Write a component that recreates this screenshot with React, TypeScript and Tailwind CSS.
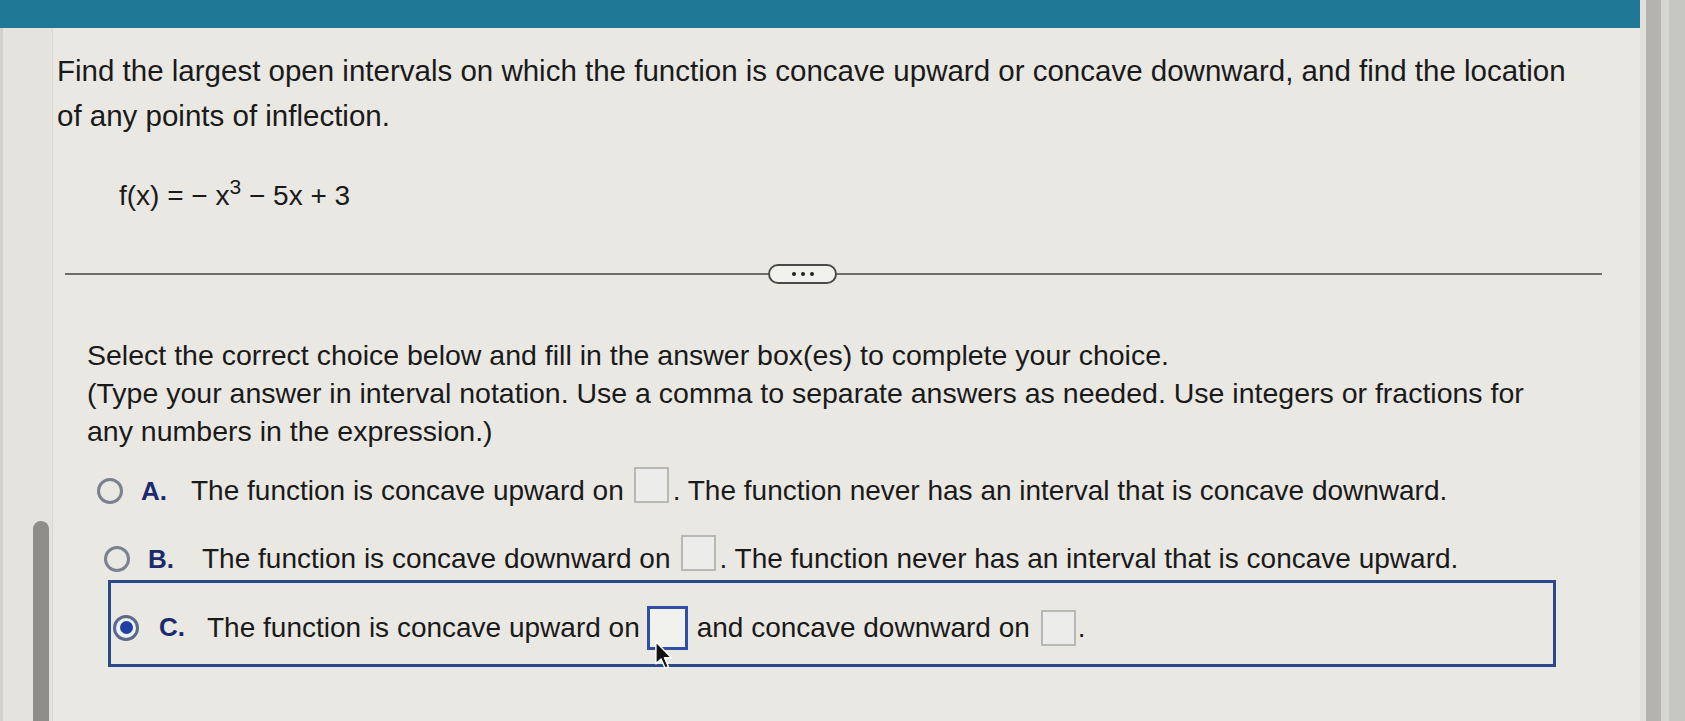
import React from "react";

const Radio = ({ checked = false }: { checked?: boolean }) => (
  <span
    className={
      checked
        ? "w-[26px] h-[26px] rounded-full border-[3px] border-[#5c6a8a] bg-[#eef0f4] flex items-center justify-center shrink-0"
        : "w-[26px] h-[26px] rounded-full border-[3px] border-[#7c8190] shrink-0"
    }
  >
    {checked && <span className="w-[13px] h-[13px] rounded-full bg-[#1f3fa3]" />}
  </span>
);

const AnswerBox = ({ active = false }: { active?: boolean }) => (
  <span
    className={
      active
        ? "inline-block w-[41px] h-[44px] border-[3px] border-[#2d4fa6] bg-[#f1f1ee] shrink-0"
        : "inline-block w-[35px] h-[36px] border-2 border-[#b8b8b5] bg-[#ececea] shrink-0"
    }
  />
);

const App = () => {
  return (
    <div className="relative w-[1685px] h-[721px] overflow-hidden flex bg-[#e9e8e3] text-[#1a1a1a] font-['Liberation_Sans',Arial,sans-serif]">
      <div className="w-[1640px] shrink-0 flex flex-col">
        <div className="h-[28px] shrink-0 bg-[#1e7896]" />
        <div className="flex flex-1 min-h-0">
          {/* left gutter with scroll thumb */}
          <div className="w-[52px] shrink-0 flex flex-col justify-end border-l-[3px] border-[#d3d1cb] bg-[#e5e3dd]">
            <div className="ml-[30px] w-[16px] h-[200px] rounded-t-full bg-[#8f8d89]" />
          </div>

          <div className="flex-1 min-w-0 pr-[38px] border-l border-[#dad8d2]">
            <p className="pt-[20px] pl-[4px] text-[29.5px] leading-[45px]">
              Find the largest open intervals on which the function is concave upward or concave downward, and find the location
              <br />
              of any points of inflection.
            </p>

            <p className="mt-[35px] pl-[66px] text-[28px] leading-[45px]">
              f(x) = − x<sup className="text-[21px] relative top-[-11px]">3</sup> − 5x + 3
            </p>

            <div className="mt-[46px] ml-[12px] h-[20px] flex items-center">
              <div className="w-[703px] h-[2px] bg-[#6e6e6c]" />
              <div className="w-[69px] h-[20px] rounded-full border-2 border-[#4a4a4a] bg-[#f1f1ee] flex items-center justify-center gap-[5px] shrink-0">
                <span className="w-[4px] h-[4px] rounded-full bg-[#222]" />
                <span className="w-[4px] h-[4px] rounded-full bg-[#222]" />
                <span className="w-[4px] h-[4px] rounded-full bg-[#222]" />
              </div>
              <div className="flex-1 h-[2px] bg-[#6e6e6c]" />
            </div>

            <p className="mt-[52px] pl-[34px] text-[28.5px] leading-[38px]">
              Select the correct choice below and fill in the answer box(es) to complete your choice.
              <br />
              (Type your answer in interval notation. Use a comma to separate answers as needed. Use integers or fractions for
              <br />
              any numbers in the expression.)
            </p>

            <div className="mt-[21px] ml-[44px] h-[40px] flex items-center text-[28px]">
              <Radio />
              <span className="ml-[18px] w-[28px] font-bold text-[#1e2a6e] text-[26px]">A.</span>
              <span className="ml-[22px]">The function is concave upward on</span>
              <span className="ml-[10px]">
                <AnswerBox />
              </span>
              <span className="ml-[4px]">. The function never has an interval that is concave downward.</span>
            </div>

            <div className="mt-[28px] ml-[51px] h-[40px] flex items-center text-[28px]">
              <Radio />
              <span className="ml-[18px] w-[28px] font-bold text-[#1e2a6e] text-[26px]">B.</span>
              <span className="ml-[26px]">The function is concave downward on</span>
              <span className="ml-[10px]">
                <AnswerBox />
              </span>
              <span className="ml-[4px]">. The function never has an interval that is concave upward.</span>
            </div>

            <div className="mt-[1px] ml-[55px] w-[1448px] h-[87px] border-[3px] border-[#2b4a8e] flex items-center pl-[2px] pt-[8px] text-[28px]">
              <Radio checked />
              <span className="ml-[20px] w-[28px] font-bold text-[#1e2a6e] text-[26px]">C.</span>
              <span className="ml-[20px]">The function is concave upward on</span>
              <span className="ml-[7px] flex">
                <AnswerBox active />
              </span>
              <span className="ml-[9px]">and concave downward on</span>
              <span className="ml-[11px] flex">
                <AnswerBox />
              </span>
              <span className="ml-[2px]">.</span>
            </div>
          </div>
        </div>
      </div>

      {/* right bezel strips */}
      <div className="flex-1 flex">
        <div className="w-[6px] bg-[#e1e0da]" />
        <div className="w-[15px] bg-[#b4b3ae]" />
        <div className="w-[8px] bg-[#d7d6d1]" />
        <div className="flex-1 bg-[#c7c7c2]" />
      </div>

      {/* mouse pointer */}
      <svg
        className="absolute left-[655px] top-[641px]"
        width="18"
        height="28"
        viewBox="0 0 12 19"
      >
        <path
          d="M0.5 0.5 L0.5 15.5 L4 12.2 L6.8 18.5 L9 17.5 L6.3 11.4 L11 11.4 Z"
          fill="#111"
          stroke="#fff"
          strokeWidth="1"
          strokeLinejoin="round"
        />
      </svg>
    </div>
  );
};

export default App;
